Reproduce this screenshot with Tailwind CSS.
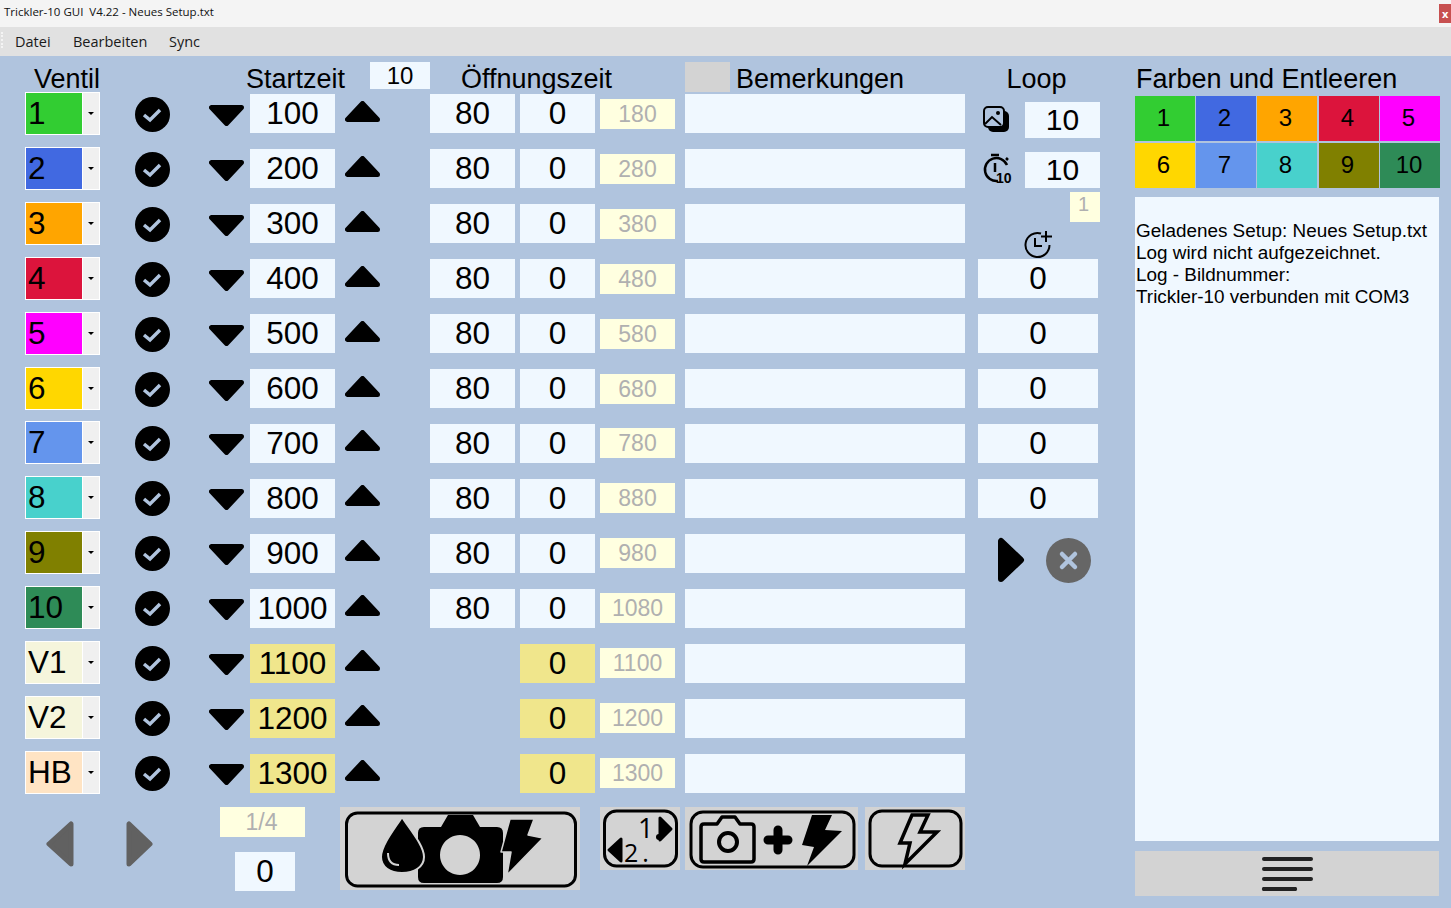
<!DOCTYPE html>
<html lang="en">
<head>
    <meta charset="UTF-8">
    <meta name="viewport" content="width=device-width, initial-scale=1.0">
    <title>Trickler-10 GUI</title>
    <script src="https://cdn.jsdelivr.net/npm/@tailwindcss/browser@4"></script>
</head>
<body class="bg-[#b0c4de] h-[908px] overflow-hidden text-black font-['Liberation_Sans',sans-serif]">
    <!-- Titelleiste -->
    <div class="relative h-[27px] bg-[#f4f4f4] pl-1 pt-[4px] text-[11.5px] leading-[16px] font-['Open_Sans',sans-serif] text-[#111]">
        <span class="whitespace-pre">Trickler-10 GUI  V4.22 - Neues Setup.txt</span>
        <div class="absolute right-0 top-1 w-3 h-[19px] bg-[#c75050] text-white text-[11px] font-bold leading-[19px] pl-[3px] overflow-hidden">x</div>
    </div>

    <!-- Menu -->
    <div class="relative h-[29px] bg-[#e1e1e1] flex items-center pl-[15px] text-[14.5px] text-[#1a1a1a] font-['Open_Sans',sans-serif]">
        <div class="absolute left-[1px] top-[5px] h-[16px] border-l-2 border-dotted border-[#f4f4f4]"></div>
        <span class="w-[58px]">Datei</span>
        <span class="w-[96px]">Bearbeiten</span>
        <span>Sync</span>
    </div>

    <div class="flex h-[852px]">
        <!-- Ventile -->
        <div class="w-[978px] shrink-0">
            <div class="h-[36px] flex items-start text-[27px] leading-[32px]">
                <div class="w-[212px] pl-[34px] pt-[7px] box-content">Ventil</div>
                <div class="w-[124px] pl-0 pt-[7px]">Startzeit</div>
                <div class="w-[60px] h-[27px] mt-[6px] bg-[#f0f8ff] text-[24px] leading-[27px] text-center">10</div>
                <div class="w-[255px] pl-[31px] pt-[7px]">Öffnungszeit</div>
                <div class="w-[45px] h-[30px] mt-[6px] bg-[#d3d3d3]"></div>
                <div class="pl-[6px] pt-[7px]">Bemerkungen</div>
            </div>
            <div id="rows"></div>

            <!-- untere Leiste -->
            <div class="flex items-start">
                <div class="w-[220px] pl-[46px] pt-[14px] flex">
                    <svg class="w-[29px] h-[46px]" viewBox="0 0 29 46"><polygon points="25,3 25,43 3,23" fill="#616161" stroke="#616161" stroke-width="5" stroke-linejoin="round"/></svg>
                    <svg class="w-[29px] h-[46px] ml-[50px]" viewBox="0 0 29 46"><polygon points="4,3 4,43 25,23" fill="#616161" stroke="#616161" stroke-width="5" stroke-linejoin="round"/></svg>
                </div>
                <div class="w-[120px]">
                    <div class="w-[85px] h-[30px] bg-[#ffffe0] text-[23px] leading-[30px] text-center text-[#b0b0b0] pr-[2px]">1/4</div>
                    <div class="w-[60px] h-[39px] ml-[15px] mt-[15px] bg-[#f0f8ff] text-[31.5px] leading-[39px] text-center">0</div>
                </div>
                <svg class="w-[240px] h-[83px] bg-[#d3d3d3]" viewBox="0 0 240 83">
                    <rect x="6.500" y="6" width="229" height="73" rx="11" fill="none" stroke="#000" stroke-width="3"/>
                    <path fill-rule="evenodd" d="M84 20h17l7-12h25l7 12h17q6 0 6 6v44q0 6-6 6H84q-6 0-6-6V26q0-6 6-6ZM120 28a20 20 0 1 0 .01 0Z"/>
                    <path d="M62 10C56 20 41 38 41 50C41 60 50 66 62 66C74 66 84 60 84 50C84 38 68 20 62 10Z" stroke="#d3d3d3" stroke-width="2"/>
                    <path d="M48 46C48 54 52 58 59 58" fill="none" stroke="#d3d3d3" stroke-width="2"/>
                    <polygon points="170,12 194,12 188,28 203,31 167,68 171,45 161,45" stroke="#d3d3d3" stroke-width="1.500" stroke-linejoin="round"/>
                </svg>
                <svg class="w-[80px] h-[63px] ml-[20px] bg-[#d3d3d3]" viewBox="0 0 80 63">
                    <rect x="4.500" y="4" width="72" height="55" rx="12" fill="none" stroke="#000" stroke-width="3"/>
                    <text x="38" y="31" font-family="Open Sans" font-size="27">1</text>
                    <polygon points="60,11 60,33 71,22" stroke="#000" stroke-width="3" stroke-linejoin="round"/>
                    <circle cx="59" cy="30" r="3"/>
                    <polygon points="21,32 21,54 9,43" stroke="#000" stroke-width="3" stroke-linejoin="round"/>
                    <text x="24" y="55" font-family="Open Sans" font-size="25" letter-spacing="4">2.</text>
                </svg>
                <svg class="w-[173px] h-[63px] ml-[5px] bg-[#d3d3d3]" viewBox="0 0 173 63">
                    <rect x="6" y="5" width="163" height="55" rx="12" fill="none" stroke="#000" stroke-width="3"/>
                    <path d="M19 17h13l5-7h13l5 7h11q3 0 3 3v32q0 3-3 3H19q-3 0-3-3V20q0-3 3-3Z" fill="none" stroke="#000" stroke-width="3.500" stroke-linejoin="round"/>
                    <circle cx="43" cy="35" r="9" fill="none" stroke="#000" stroke-width="4"/>
                    <path d="M83 33h20M93 23v20" stroke="#000" stroke-width="9" stroke-linecap="round"/>
                    <polygon points="127,8 147,8 140,23 157,24 122,59 129,40 117,38"/>
                </svg>
                <svg class="w-[100px] h-[63px] ml-[7px] bg-[#d3d3d3]" viewBox="0 0 100 63">
                    <rect x="5" y="4" width="91" height="55" rx="12" fill="none" stroke="#000" stroke-width="3"/>
                    <polygon points="47,8 63,8 55,25 72,25 40,57 45,36 35,36" fill="none" stroke="#000" stroke-width="3.500" stroke-linejoin="miter"/>
                </svg>
            </div>
        </div>

        <!-- Loop -->
        <div class="w-[157px] shrink-0">
            <div class="w-[120px] h-[36px] pt-[7px] pr-[3px] text-[27px] leading-[32px] text-center">Loop</div>
            <div class="flex items-start mt-[10px] h-[50px]">
                <svg class="w-[30px] h-[30px] ml-[4px] mt-[3px]" viewBox="0 0 30 30">
                    <rect x="6" y="6" width="21" height="21" rx="5" fill="#000"/>
                    <rect x="2" y="2" width="20" height="20" rx="4" fill="#b0c4de" stroke="#000" stroke-width="2"/>
                    <path d="M3 19l7-7 9 8" fill="none" stroke="#000" stroke-width="2"/>
                    <circle cx="16" cy="8" r="2"/>
                </svg>
                <div class="w-[75px] h-[36px] ml-[13px] bg-[#f0f8ff] text-[30px] leading-[36px] text-center">10</div>
            </div>
            <div class="flex items-start h-[40px]">
                <svg class="w-[30px] h-[32px] ml-[4px] mt-[1px]" viewBox="0 0 30 32">
                    <path d="M16 28A11.500 11.500 0 1 1 25 12" fill="none" stroke="#000" stroke-width="2.500"/>
                    <path d="M9 2h8M13 10v9M24 5l2 2" fill="none" stroke="#000" stroke-width="2.500"/>
                    <text x="14" y="30" font-family="Liberation Sans" font-size="14" font-weight="bold">10</text>
                </svg>
                <div class="w-[75px] h-[36px] ml-[13px] bg-[#f0f8ff] text-[30px] leading-[36px] text-center">10</div>
            </div>
            <div class="w-[30px] h-[30px] ml-[92px] bg-[#ffffe0] text-[#b0b0b0] text-[20px] leading-[24px] text-center pr-[3px]">1</div>
            <svg class="w-[30px] h-[28px] ml-[45px] mt-[8px]" viewBox="0 0 30 28">
                <path d="M18 3.500A12 12 0 1 0 26.500 15" fill="none" stroke="#000" stroke-width="2"/>
                <path d="M12 8v8h7M23 1v11M18 6.500h11" fill="none" stroke="#000" stroke-width="2"/>
            </svg>
            <div class="w-[120px] h-[39px] mt-[1px] mb-[16px] bg-[#f0f8ff] text-[31.5px] leading-[39px] text-center">0</div>
            <div class="w-[120px] h-[39px] mb-[16px] bg-[#f0f8ff] text-[31.5px] leading-[39px] text-center">0</div>
            <div class="w-[120px] h-[39px] mb-[16px] bg-[#f0f8ff] text-[31.5px] leading-[39px] text-center">0</div>
            <div class="w-[120px] h-[39px] mb-[16px] bg-[#f0f8ff] text-[31.5px] leading-[39px] text-center">0</div>
            <div class="w-[120px] h-[39px] mb-[16px] bg-[#f0f8ff] text-[31.5px] leading-[39px] text-center">0</div>
            <div class="flex items-center pt-[3px]">
                <svg class="w-[28px] h-[46px] ml-[19px]" viewBox="0 0 28 46"><polygon points="4,4 4,42 24,23" stroke="#000" stroke-width="6" stroke-linejoin="round"/></svg>
                <svg class="w-[45px] h-[45px] ml-[21px]" viewBox="0 0 45 45">
                    <circle cx="22.500" cy="22.500" r="22.500" fill="#666"/>
                    <path d="M16 16l13 13M29 16L16 29" stroke="#b0c4de" stroke-width="4.500" stroke-linecap="round"/>
                </svg>
            </div>
        </div>

        <!-- Farben und Log -->
        <div class="w-[316px]">
            <div class="h-[40px] pt-[7px] pl-[1px] text-[27px] leading-[32px]">Farben und Entleeren</div>
            <div class="grid grid-cols-[60px_60px_60px_60px_60px] gap-x-[1px] gap-y-[2px] text-[24px] text-center leading-[43px] w-[305px]">
                <div class="h-[45px] bg-[#32cd32] pr-[3px]">1</div>
                <div class="h-[45px] bg-[#4169e1] pr-[3px]">2</div>
                <div class="h-[45px] bg-[#ffa500] pr-[3px]">3</div>
                <div class="h-[45px] bg-[#dc143c] ml-[1px] w-[60px] pr-[3px]">4</div>
                <div class="h-[45px] bg-[#ff00ff] ml-[1px] w-[60px] pr-[3px]">5</div>
                <div class="h-[45px] bg-[#ffd700] pr-[3px]">6</div>
                <div class="h-[45px] bg-[#6495ed] pr-[3px]">7</div>
                <div class="h-[45px] bg-[#48d1cc] pr-[3px]">8</div>
                <div class="h-[45px] bg-[#808000] ml-[1px] w-[60px] pr-[3px]">9</div>
                <div class="h-[45px] bg-[#2e8b57] ml-[1px] w-[60px] pr-[2px]">10</div>
            </div>
            <div class="w-[304px] h-[644px] mt-[9px] bg-[#f0f8ff] pl-[1px] pt-[23px] text-[18.9px] leading-[22px]">
                <div>Geladenes Setup: Neues Setup.txt</div>
                <div>Log wird nicht aufgezeichnet.</div>
                <div>Log - Bildnummer:</div>
                <div>Trickler-10 verbunden mit COM3</div>
            </div>
            <div class="w-[304px] h-[45px] mt-[10px] bg-[#d3d3d3] flex flex-col items-center justify-center gap-[6px]">
                <div class="w-[51px] h-[4px] rounded-full bg-[#222]"></div>
                <div class="w-[51px] h-[4px] rounded-full bg-[#222]"></div>
                <div class="w-[51px] h-[4px] rounded-full bg-[#222]"></div>
                <div class="w-[51px] h-[4px] rounded-full bg-[#222] -translate-x-[8px] scale-x-[0.69]"></div>
            </div>
        </div>
    </div>

    <script>
        const rows = [
            ['1', 'bg-[#32cd32]', 100], ['2', 'bg-[#4169e1]', 200], ['3', 'bg-[#ffa500]', 300],
            ['4', 'bg-[#dc143c]', 400], ['5', 'bg-[#ff00ff]', 500], ['6', 'bg-[#ffd700]', 600],
            ['7', 'bg-[#6495ed]', 700], ['8', 'bg-[#48d1cc]', 800], ['9', 'bg-[#808000]', 900],
            ['10', 'bg-[#2e8b57]', 1000], ['V1', 'bg-[#f5f5dc]', 1100], ['V2', 'bg-[#f5f5dc]', 1200],
            ['HB', 'bg-[#ffe4c4]', 1300]
        ];

        // Zeilen aufbauen, die letzten drei haben keine Öffnungszeit
        document.getElementById('rows').innerHTML = rows.map(([name, color, start], i) => {
            const extra = i > 9;
            const inputBg = extra ? 'bg-[#f0e68c]' : 'bg-[#f0f8ff]';
            // ab Zeile 7 liegen Combo, Haken, Pfeile und Summe einen Pixel höher
            const up = i > 5 ? '-translate-y-[1px]' : '';
            const open = extra
                ? '<div class="w-[85px] ml-[50px]"></div>'
                : '<div class="w-[85px] h-[39px] ml-[50px] bg-[#f0f8ff] text-[31.5px] leading-[39px] text-center">80</div>';
            return `<div class="h-[43px] mb-[12px] flex items-center">
                <div class="w-[75px] h-[43px] ml-[25px] flex border border-white ${up}">
                    <div class="w-[57px] h-full ${color} pl-[2px] text-[31.5px] leading-[41px] border-r border-white">${name}</div>
                    <div class="flex-1 bg-[#f0f0f0] flex items-center justify-center"><div class="border-x-[3px] border-x-transparent border-t-[3px] border-t-black"></div></div>
                </div>
                <svg class="w-[35px] h-[35px] ml-[35px] mt-[2px] ${up}" viewBox="0 0 35 35">
                    <circle cx="17.500" cy="17.500" r="17.500"/>
                    <path d="M9 18l6 5 10-10" fill="none" stroke="#b0c4de" stroke-width="3.500"/>
                </svg>
                <svg class="w-[35px] h-[21px] ml-[39px] mt-[4px] ${up}" viewBox="0 0 35 21"><polygon points="2.500,2.500 32.500,2.500 17.500,18.500" stroke="#000" stroke-width="5" stroke-linejoin="round"/></svg>
                <div class="w-[85px] h-[39px] ml-[6px] ${inputBg} text-[31.5px] leading-[39px] text-center">${start}</div>
                <svg class="w-[35px] h-[21px] ml-[10px] mb-[4px] ${up}" viewBox="0 0 35 21"><polygon points="2.500,18.500 32.500,18.500 17.500,2.500" stroke="#000" stroke-width="5" stroke-linejoin="round"/></svg>
                ${open}
                <div class="w-[75px] h-[39px] ml-[5px] ${inputBg} text-[31.5px] leading-[39px] text-center">0</div>
                <div class="w-[75px] h-[30px] ml-[5px] mt-[1px] bg-[#ffffe0] text-[#b0b0b0] text-[23px] leading-[30px] text-center ${up}">${start + (extra ? 0 : 80)}</div>
                <div class="w-[280px] h-[39px] ml-[10px] bg-[#f0f8ff]"></div>
            </div>`;
        }).join('');
    </script>
</body>
</html>
